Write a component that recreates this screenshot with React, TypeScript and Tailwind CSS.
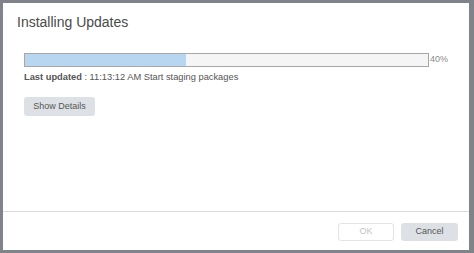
import React from 'react';

const App: React.FC = () => {
  const percent = 40;
  return (
    <div
      className="w-[474px] h-[253px] bg-[#80848a] pt-[3px] pl-[3px] pr-[5px] pb-[3px]"
      style={{ fontFamily: '"Liberation Sans", Arial, sans-serif' }}
    >
      <div className="flex h-full flex-col bg-white">
        <div className="px-[14px] pt-[10px] text-[14px] leading-[18px] text-[#4a4a4a]">Installing Updates</div>

        <div className="flex-1 px-[21px] pt-[22px]">
          <div className="flex items-center">
            <div className="h-[14px] w-[409px] border border-[#a7a7a7] bg-[#f5f5f5]">
              <div className="h-full bg-[#b7d7f1]" style={{ width: `${percent}%` }} />
            </div>
            <span className="ml-[1px] text-[9px] text-[#8a8a8a]">{percent}%</span>
          </div>
          <div className="mt-[4px] text-[9.3px] leading-[12px] text-[#555]">
            <span className="font-bold">Last updated</span> : 11:13:12 AM Start staging packages
          </div>
          <button className="mt-[14px] h-[19px] w-[71px] rounded-[3px] bg-[#dde1e6] text-[9px] text-[#555]">
            Show Details
          </button>
        </div>

        <div className="flex h-[39px] items-start justify-end gap-[7px] border-t border-[#dcdcdc] pr-[11px] pt-[11px]">
          <button className="h-[18px] w-[56px] rounded-[3px] border border-[#e3e3e3] bg-white text-[9px] text-[#c4c4c4]">
            OK
          </button>
          <button className="h-[18px] w-[57px] rounded-[3px] bg-[#dde1e6] text-[9px] text-[#555]">
            Cancel
          </button>
        </div>
      </div>
    </div>
  );
};

export default App;
